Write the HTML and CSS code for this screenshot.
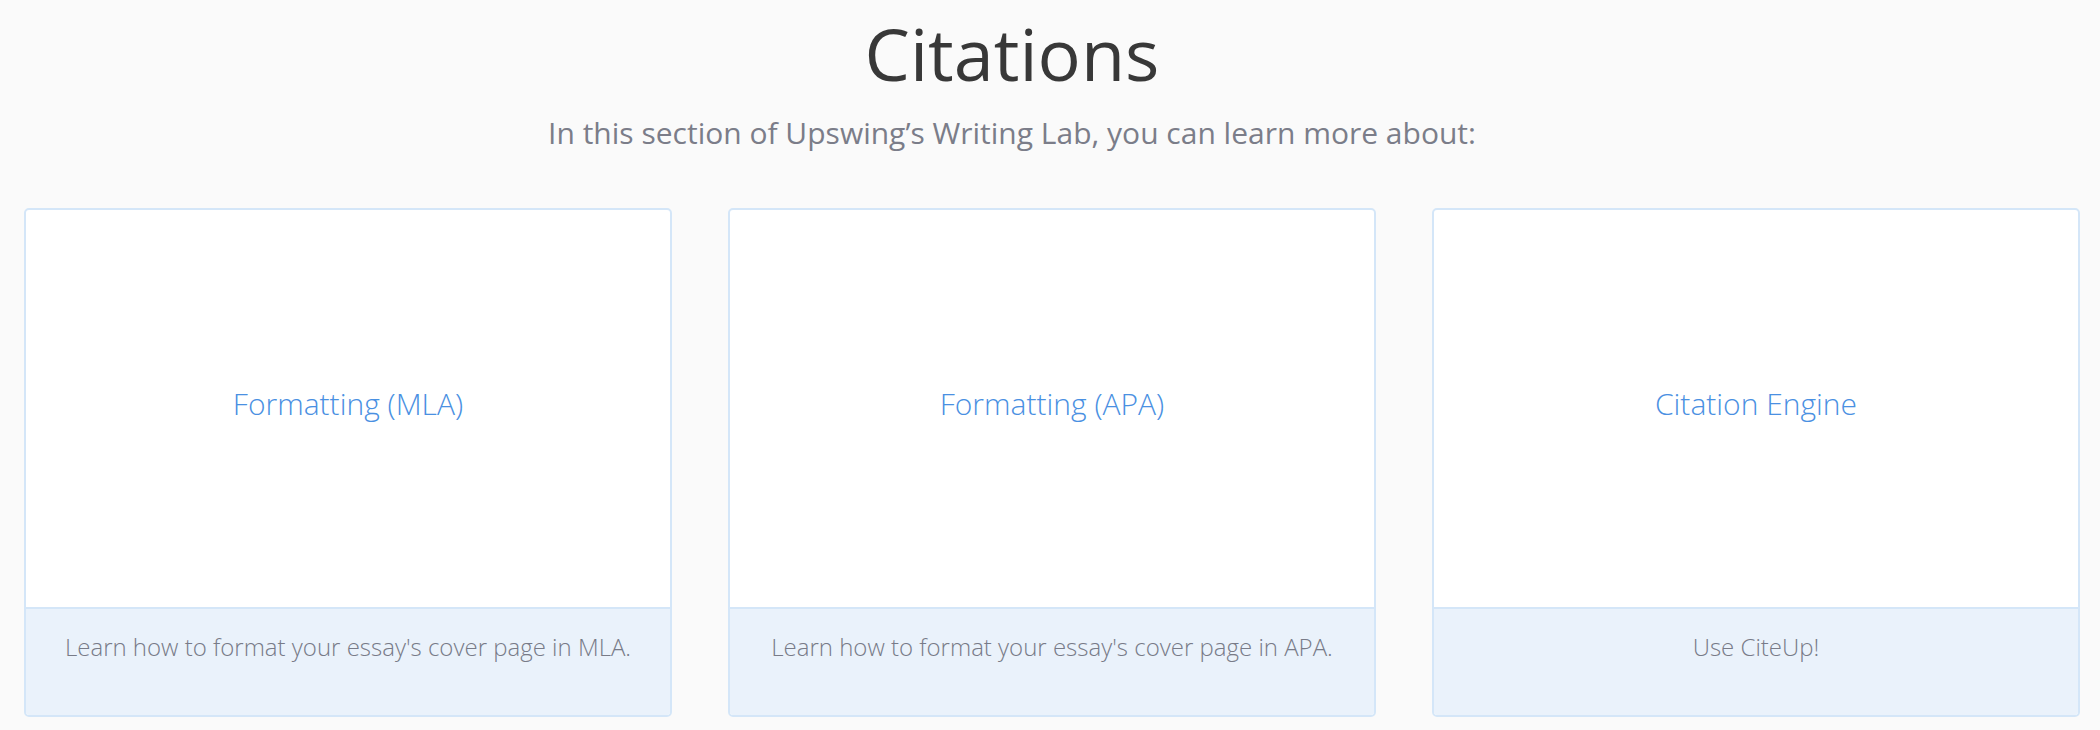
FILE: index.html
```html
<!DOCTYPE html>
<html lang="en">
<head>
    <meta charset="UTF-8">
    <meta name="viewport" content="width=device-width, initial-scale=1.0">
    <title>Citations - Upswing Writing Lab</title>
    <link rel="stylesheet" href="styles.css">
</head>
<body>
    <header class="section-header">
        <h1>Citations</h1>
        <p>In this section of Upswing’s Writing Lab, you can learn more about:</p>
    </header>
    <section class="topic-list">
        <a class="topic-card" href="#mla">
            <div class="topic-title">Formatting (MLA)</div>
            <div class="topic-footer">Learn how to format your essay's cover page in MLA.</div>
        </a>
        <a class="topic-card" href="#apa">
            <div class="topic-title">Formatting (APA)</div>
            <div class="topic-footer">Learn how to format your essay's cover page in APA.</div>
        </a>
        <a class="topic-card" href="#citeup">
            <div class="topic-title">Citation Engine</div>
            <div class="topic-footer">Use CiteUp!</div>
        </a>
    </section>
</body>
</html>
```

FILE: styles.css
```css
/* Page */
body {
    font-family: 'Open Sans', 'Liberation Sans', sans-serif;
    margin: 0;
    padding: 0;
    background: #fafafa;
    height: 730px;
    overflow: hidden;
}

/* Heading block */
.section-header {
    text-align: center;
    padding: 5px 76px 0 0;
}

.section-header h1 {
    font-size: 72px;
    font-weight: 400;
    color: #383838;
    margin: 0;
    line-height: 96px;
}

.section-header p {
    font-size: 30px;
    color: #7b7d89;
    margin: 12px 0 0;
    line-height: 40px;
}

/* Cards */
.topic-list {
    display: grid;
    grid-template-columns: repeat(3, 648px);
    gap: 56px;
    padding: 0 21px 0 24px;
    margin-top: 55px;
}

.topic-card {
    display: flex;
    flex-direction: column;
    height: 509px;
    border: 2px solid #d4e6f8;
    border-radius: 5px;
    background: #fff;
    text-decoration: none;
    box-sizing: border-box;
    overflow: hidden;
}

.topic-title {
    flex: 1;
    display: flex;
    align-items: center;
    justify-content: center;
    padding-bottom: 10px;
    font-size: 30px;
    font-weight: 300;
    color: #4a90e2;
}

.topic-footer {
    height: 108px;
    display: flex;
    align-items: center;
    justify-content: center;
    padding-bottom: 32px;
    box-sizing: border-box;
    border-top: 2px solid #d4e6f8;
    background: #eaf2fb;
    font-size: 24px;
    font-weight: 300;
    color: #787b88;
}
```
